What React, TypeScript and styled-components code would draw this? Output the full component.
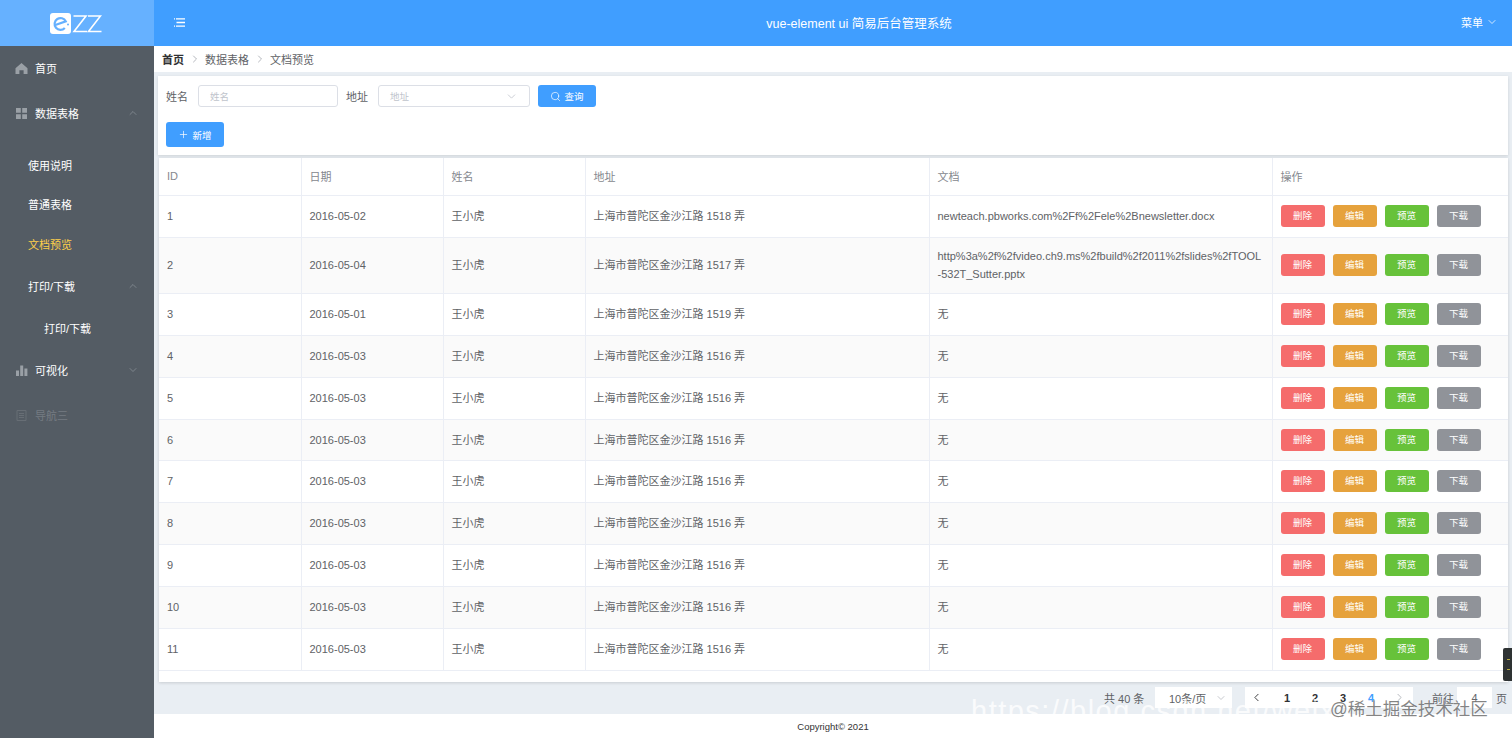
import React from 'react';
import styled, { createGlobalStyle } from 'styled-components';
import { ChevronDown, ChevronLeft, ChevronRight, ChevronUp, Plus, Search } from 'lucide-react';

const GlobalStyle = createGlobalStyle`
  html, body { margin: 0; padding: 0; height: 100%; overflow: hidden; }
  body {
    font-family: "Liberation Sans", "Noto Sans CJK SC", sans-serif;
    font-size: 11px;
    color: #606266;
    background: #fff;
  }
`;

const Page = styled.div`
  position: relative;
  width: 1512px;
  height: 738px;
  overflow: hidden;
`;

const Header = styled.header`
  display: flex;
  height: 46px;
  background: #409eff;
  color: #fff;
`;

const LogoBox = styled.div`
  width: 154px;
  background: #66b1ff;
  display: flex;
  align-items: center;
  padding-left: 50px;
  box-sizing: border-box;
`;

const HeaderBar = styled.div`
  flex: 1;
  display: flex;
  align-items: center;
  justify-content: space-between;
  padding: 0 14px 2px 20px;
`;

const HeaderTitle = styled.div`
  font-size: 12.5px;
  margin-left: 72px;
`;

const MenuLabel = styled.div`
  display: flex;
  align-items: center;
  gap: 3px;
  font-size: 11px;
`;

const Body = styled.div`
  display: flex;
  height: 692px;
`;

const Side = styled.nav`
  width: 154px;
  background: #545c64;
  flex: none;
`;

const SideRow = styled.div<{ $h: number; $indent: number; $tone?: string }>`
  height: ${(p) => p.$h}px;
  padding-left: ${(p) => p.$indent}px;
  padding-right: 15px;
  display: flex;
  align-items: center;
  gap: 7px;
  font-size: 11px;
  color: ${(p) => p.$tone || '#fff'};
`;

const SideIcon = styled.svg`
  width: 13px;
  height: 13px;
  flex: none;
`;

const SideCaret = styled.span`
  margin-left: auto;
  display: flex;
  color: #8b9198;
`;

const SubGroup = styled.div`
  padding-top: 9px;
`;

const Content = styled.main`
  flex: 1;
  display: flex;
  flex-direction: column;
  background: #e9eef3;
  min-width: 0;
`;

const Crumbs = styled.div`
  height: 26px;
  background: #fff;
  display: flex;
  align-items: center;
  padding: 0 0 1px 8px;
  box-sizing: border-box;
  flex: none;
`;

const Crumb = styled.span<{ $strong?: boolean }>`
  color: ${(p) => (p.$strong ? '#303133' : '#606266')};
  font-weight: ${(p) => (p.$strong ? 700 : 400)};
`;

const CrumbSep = styled.span`
  display: flex;
  width: 21px;
  justify-content: center;
  color: #a8abb2;
`;

const Panels = styled.div`
  padding: 4px 4px 0;
  display: flex;
  flex-direction: column;
  gap: 3px;
  flex: none;
`;

const FilterCard = styled.section`
  height: 79px;
  background: #fff;
  box-shadow: 0 1px 3px rgba(0, 0, 0, 0.12);
  padding: 9px 8px 0;
  box-sizing: border-box;
`;

const FilterRow = styled.div`
  display: flex;
  align-items: center;
  height: 22px;
`;

const FilterLabel = styled.label`
  width: 32px;
  color: #606266;
  font-size: 11px;
  padding-bottom: 1px;
`;

const Field = styled.div<{ $w: number }>`
  width: ${(p) => p.$w}px;
  height: 22px;
  box-sizing: border-box;
  border: 1px solid #dcdfe6;
  border-radius: 3px;
  margin-right: 8px;
  padding: 0 11px;
  display: flex;
  align-items: center;
  justify-content: space-between;
  color: #c0c4cc;
  font-size: 9.5px;
  background: #fff;
`;

const PrimaryButton = styled.button<{ $w: number; $h: number }>`
  width: ${(p) => p.$w}px;
  height: ${(p) => p.$h}px;
  border: 0;
  border-radius: 3px;
  padding: 0;
  background: #409eff;
  color: #fff;
  font: inherit;
  font-size: 9.5px;
  display: flex;
  align-items: center;
  justify-content: center;
  gap: 3px;
`;

const AddRow = styled.div`
  margin-top: 15px;
`;

const TableCard = styled.section`
  background: #fff;
  height: 524px;
  box-shadow: 0 1px 3px rgba(0, 0, 0, 0.14);
  margin-left: 1px;
`;

const Table = styled.table`
  width: 1349px;
  border-collapse: collapse;
  table-layout: fixed;
  font-size: 11px;
`;

const HeadCell = styled.th`
  height: 37px;
  padding: 0 8px;
  box-sizing: border-box;
  text-align: left;
  font-weight: 400;
  color: #85888e;
  font-size: 11px;
  border-bottom: 1px solid #ebeef5;
  border-right: 1px solid #ebeef5;

  &:last-child {
    border-right: 0;
  }
`;

const Row = styled.tr<{ $striped: boolean; $h: number }>`
  height: ${(p) => p.$h}px;
  background: ${(p) => (p.$striped ? '#fafafa' : '#fff')};
`;

const Cell = styled.td`
  padding: 0 8px;
  box-sizing: border-box;
  color: #606266;
  line-height: 18px;
  word-break: break-all;
  border-bottom: 1px solid #ebeef5;
  border-right: 1px solid #ebeef5;

  &:last-child {
    border-right: 0;
  }
`;

const Actions = styled.div`
  display: flex;
  gap: 8px;
`;

const ActionButton = styled.button<{ $bg: string }>`
  width: 44px;
  height: 22px;
  padding: 0;
  border: 0;
  border-radius: 3px;
  background: ${(p) => p.$bg};
  color: #fff;
  font: inherit;
  font-size: 9.5px;
`;

const Pager = styled.div`
  height: 32px;
  display: flex;
  align-items: center;
  padding: 0 0 1px 950px;
  box-sizing: border-box;
  flex: none;
  color: #606266;
`;

const PagerTotal = styled.span`
  width: 51px;
`;

const PagerSelect = styled.div`
  width: 77px;
  height: 21px;
  background: #fff;
  display: flex;
  align-items: center;
  justify-content: space-between;
  padding: 0 5px 0 14px;
  box-sizing: border-box;
  margin-right: 13px;
  color: #606266;
`;

const PagerList = styled.div`
  width: 168px;
  height: 21px;
  background: #fff;
  display: flex;
  align-items: center;
  margin-right: 19px;
`;

const PagerPrev = styled.span`
  width: 22px;
  margin-right: 6px;
  display: flex;
  justify-content: center;
  color: #303133;
`;

const PagerItem = styled.span<{ $active?: boolean; $faint?: boolean }>`
  width: 28px;
  display: flex;
  justify-content: center;
  font-weight: 700;
  color: ${(p) => (p.$active ? '#409eff' : p.$faint ? '#a8abb2' : '#303133')};
`;

const PagerInput = styled.div`
  width: 35px;
  height: 21px;
  background: #fff;
  margin: 0 4px 0 3px;
  display: flex;
  align-items: center;
  justify-content: center;
`;

const Footer = styled.footer`
  height: 24px;
  margin-top: auto;
  background: #fff;
  display: flex;
  align-items: center;
  justify-content: center;
  font-size: 9.5px;
  color: #333;
  flex: none;
`;

const Watermark = styled.div`
  position: absolute;
  left: 971px;
  top: 695px;
  font-size: 29px;
  letter-spacing: 1.5px;
  color: rgba(255, 255, 255, 0.8);
  white-space: nowrap;
  width: 530px;
  overflow: hidden;
`;

const WatermarkBrand = styled.div`
  position: absolute;
  left: 1330px;
  top: 695px;
  font-size: 17.5px;
  color: rgba(85, 85, 85, 0.72);
  white-space: nowrap;
  text-shadow: 0 0 2px rgba(255, 255, 255, 0.7);
`;

const SideTab = styled.div`
  position: absolute;
  right: 0;
  top: 648px;
  width: 9px;
  height: 33px;
  background: #2e3233;
  border-radius: 2px 0 0 2px;
  display: flex;
  flex-direction: column;
  align-items: flex-end;
  justify-content: space-around;
  padding: 6px 2px;
  box-sizing: border-box;
`;

const TabTick = styled.i`
  width: 3px;
  height: 1px;
  background: #b7a93c;
`;

const Logo = () => (
  <svg width="52" height="21" viewBox="0 0 52 21">
    <rect x="0" y="0" width="21" height="21" rx="3" fill="#fff" />
    <path d="M4.6 12.2 15.8 8.4A5.9 5.9 0 1 0 14.8 15" fill="none" stroke="#66b1ff" strokeWidth="2.2" />
    <circle cx="18" cy="11.5" r="1" fill="#66b1ff" />
    <path d="M23.5 3H36L24 18.5H37M38 3H50.5L38.5 18.5H51.5" fill="none" stroke="#fff" strokeWidth="1.6" />
  </svg>
);

const Hamburger = () => (
  <svg width="11" height="11" viewBox="0 0 11 11" fill="none" stroke="#fff" strokeWidth="1.3">
    <path d="M2 1.8h9M2.5 5.5h8.5M2 9.2h9M0 1.8h1M0 9.2h1" />
  </svg>
);

const HomeIcon = () => (
  <SideIcon viewBox="0 0 13 13" fill="#9aa0a6">
    <path d="M6.5 1 12.5 6.2V12H8.6V8.2H4.4V12H.5V6.2z" />
  </SideIcon>
);

const GridIcon = () => (
  <SideIcon viewBox="0 0 13 13" fill="#9aa0a6">
    <path d="M1 1h4.8v4.8H1zM7.2 1H12v4.8H7.2zM1 7.2h4.8V12H1zM7.2 7.2H12V12H7.2z" />
  </SideIcon>
);

const BarsIcon = () => (
  <SideIcon viewBox="0 0 13 13" fill="#9aa0a6">
    <path d="M1 6.5h3V12H1zM5.2 1.5h3V12h-3zM9.4 4.5h3V12h-3z" />
  </SideIcon>
);

const DocIcon = () => (
  <SideIcon viewBox="0 0 13 13" fill="none" stroke="#676e75">
    <path d="M2 1.5h9v10H2zM4 4.5h5M4 6.5h5M4 8.5h5" />
  </SideIcon>
);

const columns = [
  { title: 'ID', width: 142 },
  { title: '日期', width: 142 },
  { title: '姓名', width: 142 },
  { title: '地址', width: 344 },
  { title: '文档', width: 343 },
  { title: '操作', width: 236 },
];

const rows = [
  { id: 1, date: '2016-05-02', no: 1518, doc: 'newteach.pbworks.com%2Ff%2Fele%2Bnewsletter.docx', h: 42 },
  { id: 2, date: '2016-05-04', no: 1517, doc: 'http%3a%2f%2fvideo.ch9.ms%2fbuild%2f2011%2fslides%2fTOOL-532T_Sutter.pptx', h: 56 },
  { id: 3, date: '2016-05-01', no: 1519, doc: '无', h: 42 },
  { id: 4, date: '2016-05-03', no: 1516, doc: '无', h: 42 },
  { id: 5, date: '2016-05-03', no: 1516, doc: '无', h: 42 },
  { id: 6, date: '2016-05-03', no: 1516, doc: '无', h: 41 },
  { id: 7, date: '2016-05-03', no: 1516, doc: '无', h: 42 },
  { id: 8, date: '2016-05-03', no: 1516, doc: '无', h: 42 },
  { id: 9, date: '2016-05-03', no: 1516, doc: '无', h: 42 },
  { id: 10, date: '2016-05-03', no: 1516, doc: '无', h: 42 },
  { id: 11, date: '2016-05-03', no: 1516, doc: '无', h: 42 },
];

const actions = [
  { label: '删除', color: '#f56c6c' },
  { label: '编辑', color: '#e6a23c' },
  { label: '预览', color: '#67c23a' },
  { label: '下载', color: '#909399' },
];

const App = () => (
  <Page>
    <GlobalStyle />
    <Header>
      <LogoBox>
        <Logo />
      </LogoBox>
      <HeaderBar>
        <Hamburger />
        <HeaderTitle>vue-element ui 简易后台管理系统</HeaderTitle>
        <MenuLabel>
          菜单
          <ChevronDown size={12} strokeWidth={1.5} />
        </MenuLabel>
      </HeaderBar>
    </Header>
    <Body>
      <Side>
        <SideRow $h={44} $indent={15}>
          <HomeIcon />
          首页
        </SideRow>
        <SideRow $h={46} $indent={15}>
          <GridIcon />
          数据表格
          <SideCaret>
            <ChevronUp size={12} strokeWidth={1.5} />
          </SideCaret>
        </SideRow>
        <SubGroup>
          <SideRow $h={40} $indent={28}>使用说明</SideRow>
          <SideRow $h={38} $indent={28}>普通表格</SideRow>
          <SideRow $h={42} $indent={28} $tone="#ffd04b">文档预览</SideRow>
          <SideRow $h={42} $indent={28}>
            打印/下载
            <SideCaret>
              <ChevronUp size={12} strokeWidth={1.5} />
            </SideCaret>
          </SideRow>
          <SideRow $h={42} $indent={44}>打印/下载</SideRow>
        </SubGroup>
        <SideRow $h={42} $indent={15}>
          <BarsIcon />
          可视化
          <SideCaret>
            <ChevronDown size={12} strokeWidth={1.5} />
          </SideCaret>
        </SideRow>
        <SideRow $h={48} $indent={15} $tone="#757b82">
          <DocIcon />
          导航三
        </SideRow>
      </Side>
      <Content>
        <Crumbs>
          <Crumb $strong>首页</Crumb>
          <CrumbSep><ChevronRight size={12} strokeWidth={1.7} /></CrumbSep>
          <Crumb>数据表格</Crumb>
          <CrumbSep><ChevronRight size={12} strokeWidth={1.7} /></CrumbSep>
          <Crumb>文档预览</Crumb>
        </Crumbs>
        <Panels>
          <FilterCard>
            <FilterRow>
              <FilterLabel>姓名</FilterLabel>
              <Field $w={140}>姓名</Field>
              <FilterLabel>地址</FilterLabel>
              <Field $w={152}>
                地址
                <ChevronDown size={13} strokeWidth={1.5} />
              </Field>
              <PrimaryButton $w={58} $h={22}>
                <Search size={11} strokeWidth={1.5} />
                查询
              </PrimaryButton>
            </FilterRow>
            <AddRow>
              <PrimaryButton $w={58} $h={25}>
                <Plus size={11} strokeWidth={1.5} />
                新增
              </PrimaryButton>
            </AddRow>
          </FilterCard>
          <TableCard>
            <Table>
              <colgroup>
                {columns.map((c) => (
                  <col key={c.title} width={c.width} />
                ))}
              </colgroup>
              <thead>
                <tr>
                  {columns.map((c) => (
                    <HeadCell key={c.title}>{c.title}</HeadCell>
                  ))}
                </tr>
              </thead>
              <tbody>
                {rows.map((r, i) => (
                  <Row key={r.id} $striped={i % 2 === 1} $h={r.h}>
                    <Cell>{r.id}</Cell>
                    <Cell>{r.date}</Cell>
                    <Cell>王小虎</Cell>
                    <Cell>上海市普陀区金沙江路 {r.no} 弄</Cell>
                    <Cell>{r.doc}</Cell>
                    <Cell>
                      <Actions>
                        {actions.map((a) => (
                          <ActionButton key={a.label} $bg={a.color}>{a.label}</ActionButton>
                        ))}
                      </Actions>
                    </Cell>
                  </Row>
                ))}
              </tbody>
            </Table>
          </TableCard>
        </Panels>
        <Pager>
          <PagerTotal>共 40 条</PagerTotal>
          <PagerSelect>
            10条/页
            <ChevronDown size={12} strokeWidth={1.5} color="#b4b7bd" />
          </PagerSelect>
          <PagerList>
            <PagerPrev><ChevronLeft size={13} strokeWidth={1.7} /></PagerPrev>
            <PagerItem>1</PagerItem>
            <PagerItem>2</PagerItem>
            <PagerItem>3</PagerItem>
            <PagerItem $active>4</PagerItem>
            <PagerItem $faint><ChevronRight size={13} strokeWidth={1.5} /></PagerItem>
          </PagerList>
          前往
          <PagerInput>4</PagerInput>
          页
        </Pager>
        <Footer>Copyright© 2021</Footer>
      </Content>
    </Body>
    <Watermark>https://blog.csdn.net/weixin_</Watermark>
    <WatermarkBrand>@稀土掘金技术社区</WatermarkBrand>
    <SideTab>
      <TabTick />
      <TabTick />
    </SideTab>
  </Page>
);

export default App;
